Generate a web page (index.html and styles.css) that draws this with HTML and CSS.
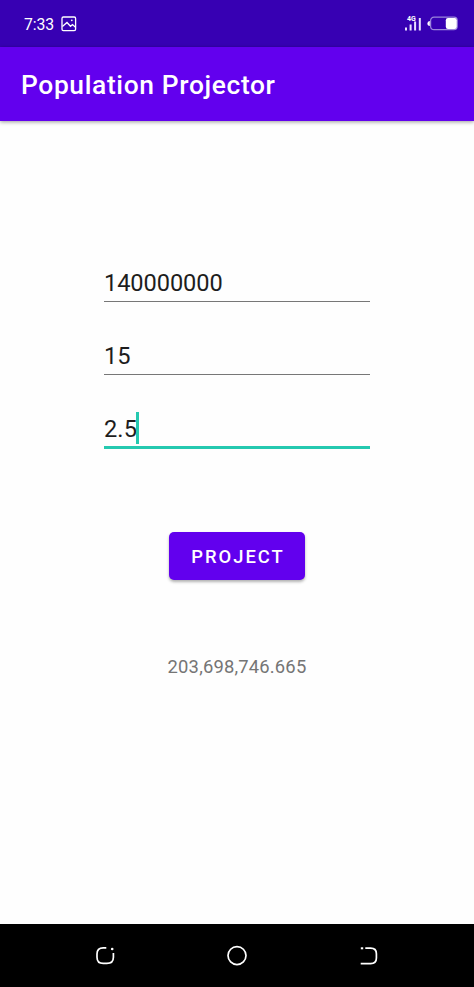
FILE: index.html
```html
<!DOCTYPE html>
<html lang="en">
<head>
<meta charset="utf-8">
<title>Population Projector</title>
<link rel="stylesheet" href="styles.css">
</head>
<body>
<div class="screen">
  <header class="status">
    <span class="time">7:33</span>
    <svg class="picture" width="16" height="16" viewBox="0 0 16 16" fill="none" stroke="#fff" stroke-width="1.3">
      <rect x="1" y="1" width="13.6" height="13.6" rx="1.4"/>
      <path d="M1.4 10.6 6 6.5l3.5 3.8 2-1.8 3 2.7"/>
      <circle cx="10.8" cy="4.3" r=".9" fill="#fff" stroke="none"/>
    </svg>
    <svg class="signal" width="54" height="20" viewBox="0 0 54 20" fill="none">
      <g fill="#e9e0ff">
        <rect x="1" y="13.5" width="2" height="3"/>
        <rect x="5.6" y="10.5" width="2" height="6"/>
        <rect x="10.1" y="7.5" width="2" height="9"/>
        <rect x="14.8" y="4" width="2" height="12.5"/>
      </g>
      <text class="network" x="3" y="7">4G</text>
      <rect x="26.6" y="3.2" width="26.6" height="12.4" rx="3.4" stroke="#9c86dc" stroke-width="1.2"/>
      <path d="M25.8 6.9c-3.2.5-3.2 4.7 0 5.2z" fill="#fff"/>
      <rect x="41.8" y="4" width="11" height="11" rx="2.2" fill="#fff"/>
    </svg>
  </header>
  <div class="appbar"><h1>Population Projector</h1></div>
  <main class="content">
    <div class="field">140000000</div>
    <div class="field">15</div>
    <div class="field active">2.5<span class="caret"></span></div>
    <button class="project">PROJECT</button>
    <div class="result">203,698,746.665</div>
  </main>
  <nav class="navbar">
    <svg width="22" height="22" viewBox="0 0 22 22" fill="none" stroke="#fff" stroke-width="1.7">
      <path d="M12.3 2.8H9.2Q3 2.8 3 9v3.2Q3 18.4 9.2 18.4h3.6q6.6 0 6.6-6.2V8"/>
      <circle cx="18.2" cy="4" r="1.3" fill="#fff" stroke="none"/>
    </svg>
    <svg width="22" height="22" viewBox="0 0 22 22" fill="none" stroke="#fff" stroke-width="1.7">
      <circle cx="11" cy="10.6" r="9"/>
    </svg>
    <svg width="22" height="22" viewBox="0 0 22 22" fill="none" stroke="#fff" stroke-width="1.7">
      <path d="M7.3 3.2H12.6q5.8 0 5.8 5.6v4.2q0 5.6-5.8 5.6H2.7"/>
      <rect x="2.8" y="2.3" width="2.4" height="2" fill="#fff" stroke="none"/>
    </svg>
  </nav>
</div>
</body>
</html>
```
FILE: styles.css
```css
* { box-sizing: border-box; }
body { margin: 0; font-family: Roboto, sans-serif; background: #fefefe; }
.screen { height: 987px; display: flex; flex-direction: column; }
.status { height: 47px; background: #3700b3; display: flex; align-items: center; padding: 0 16px 0 24px; color: #fff; }
.time { font-size: 15.8px; line-height: 20px; padding-top: 2px; letter-spacing: -.1px; }
.picture { margin-left: 7px; }
.signal { margin-left: auto; }
.network { font: bold 7px Roboto, sans-serif; fill: #fff; }
.appbar { height: 74px; background: #6200ee; display: flex; align-items: center; padding: 2px 21px 0; box-shadow: 0 1px 4px rgba(0, 0, 0, .4); }
h1 { margin: 0; font-size: 26.4px; font-weight: 500; line-height: 32px; letter-spacing: .63px; color: #fff; }
.content { flex: 1; display: flex; flex-direction: column; align-items: center; padding-top: 147px; }
.field { width: 266px; height: 34px; margin-bottom: 39px; border-bottom: 1px solid #777; font-size: 23.6px; line-height: 30px; letter-spacing: -.08px; color: #1d1d1d; display: flex; }
.active { height: 35px; margin-bottom: 83px; border-bottom: 3px solid #25c9b0; letter-spacing: .1px; }
.caret { width: 3px; height: 32px; margin: -2px 0 0 -1px; background: #25c9b0; }
.project { width: 136px; height: 48px; padding: 0 0 0 2px; border: 0; border-radius: 5px; background: #6200ee; color: #fff; font: 500 18.4px Roboto, sans-serif; letter-spacing: 2px; box-shadow: 0 2px 3px rgba(0, 0, 0, .3); }
.result { margin-top: 75px; font-size: 18.4px; line-height: 24px; letter-spacing: .18px; color: #757575; }
.navbar { height: 63px; background: #000; display: flex; justify-content: center; align-items: center; gap: 110px; }
```
